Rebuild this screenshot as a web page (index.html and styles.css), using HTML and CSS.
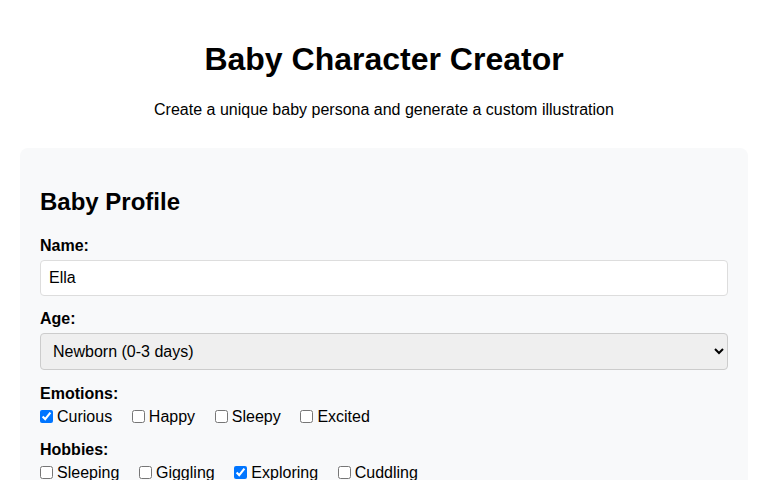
FILE: index.html
```html
<!DOCTYPE html>
<html lang="en">
<head>
<meta charset="utf-8">
<title>Baby Character Creator</title>
<link rel="stylesheet" href="styles.css">
</head>
<body>
<div class="container">
  <header class="header">
    <h1>Baby Character Creator</h1>
    <p>Create a unique baby persona and generate a custom illustration</p>
  </header>
  <section class="card">
    <h2>Baby Profile</h2>
    <div class="group">
      <label class="field-label" for="name">Name:</label>
      <input id="name" class="text-input" type="text" value="Ella">
    </div>
    <div class="group group-wide">
      <label class="field-label" for="age">Age:</label>
      <select id="age" class="select">
        <option>Newborn (0-3 days)</option>
        <option>Infant (1-6 months)</option>
      </select>
    </div>
    <div class="group group-wide">
      <div class="field-label field-label-tight">Emotions:</div>
      <div class="checks">
        <label class="check"><input type="checkbox" checked>Curious</label>
        <label class="check"><input type="checkbox">Happy</label>
        <label class="check"><input type="checkbox">Sleepy</label>
        <label class="check"><input type="checkbox">Excited</label>
      </div>
    </div>
    <div class="group group-wide">
      <div class="field-label field-label-tight">Hobbies:</div>
      <div class="checks">
        <label class="check"><input type="checkbox">Sleeping</label>
        <label class="check"><input type="checkbox">Giggling</label>
        <label class="check"><input type="checkbox" checked>Exploring</label>
        <label class="check"><input type="checkbox">Cuddling</label>
      </div>
    </div>
  </section>
</div>
</body>
</html>
```
FILE: styles.css
```css
* { box-sizing: border-box; }
body {
  margin: 0;
  font-family: "Liberation Sans", Arial, sans-serif;
  color: #000;
  background: #fff;
}
.container {
  padding: 20px;
}
.header {
  text-align: center;
  margin-bottom: 29px;
}
.header h1 {
  font-size: 32px;
  margin: 21px 0 23px;
}
.header p {
  font-size: 16px;
  margin: 0;
}
.card {
  background: #f8f9fa;
  border-radius: 8px;
  padding: 20px;
  min-height: 400px;
}
.card h2 {
  font-size: 24px;
  margin: 20px 0 21px;
}
.group {
  margin-bottom: 14px;
}
.group-wide {
  margin-bottom: 15px;
}
.field-label {
  display: block;
  font-weight: bold;
  font-size: 16px;
  margin-bottom: 5px;
}
.field-label-tight {
  margin-bottom: 4px;
}
.text-input,
.select {
  display: block;
  width: 100%;
  font-family: inherit;
  font-size: 16px;
  padding: 8px;
  border: 1px solid #ddd;
  border-radius: 4px;
  color: #000;
}
.text-input { background: #fff; }
.select { background: #efefef; border-color: #ccc; }
.checks {
  display: flex;
  gap: 0 19.7px;
}
.check {
  display: inline-flex;
  align-items: center;
  font-size: 16px;
}
.check input {
  margin: 3px 4px 3px 0;
  width: 13px;
  height: 13px;
}
```
